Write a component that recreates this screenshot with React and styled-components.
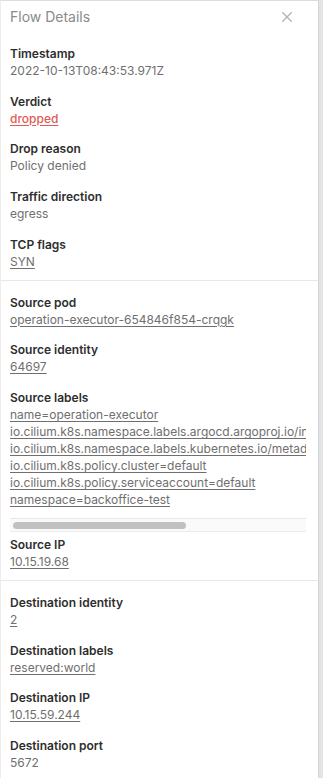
import styled, { createGlobalStyle } from "styled-components"

const Global = createGlobalStyle`
    * { box-sizing: border-box; }
    html, body { margin: 0; padding: 0; }
    body {
        background: #e3e4e8;
        font-family: Inter, "Noto Sans", "Liberation Sans", sans-serif;
        -webkit-font-smoothing: antialiased;
    }
`

const Panel = styled.aside`
    width: 319px;
    min-height: 100vh;
    background: #fff;
    border-top: 1px solid #dedede;
    border-left: 1px solid #ececec;
    border-right: 1px solid #d3d4d9;
`

const Header = styled.header`
    height: 31px;
    padding: 1px 25px 0 9px;
    display: flex;
    align-items: center;
    justify-content: space-between;
`

const Title = styled.h2`
    margin: 0;
    font-size: 14px;
    font-weight: 400;
    color: #8a8a8a;
    line-height: 20px;
`

const Close = styled.button`
    border: 0;
    background: none;
    padding: 0;
    width: 12px;
    height: 12px;
    display: flex;
    cursor: pointer;
    svg { display: block; }
`

const Group = styled.section`
    padding: 13px 12px 10px 9px;
    display: flex;
    flex-direction: column;
    gap: 13.7px;
    & + & { border-top: 1px solid #e8e8e8; }
`

const Item = styled.div`
    display: flex;
    flex-direction: column;
    margin-bottom: ${p => p.$tight ? "-10px" : "0"};
`

const Label = styled.div`
    font-size: 12px;
    line-height: 17px;
    font-weight: 600;
    color: #2e2e2e;
`

const Value = styled.div`
    font-size: 12px;
    line-height: 17px;
    font-weight: ${p => p.$danger ? 500 : 400};
    color: ${p => p.$danger ? "#e25a52" : "#6f6f6f"};
    text-decoration: ${p => p.$link ? "underline" : "none"};
    text-underline-offset: 2px;
    white-space: nowrap;
`

const Scroller = styled.div`
    overflow-x: auto;
    overflow-y: hidden;
    padding-bottom: 10px;
    scrollbar-width: none;
    &::-webkit-scrollbar { display: none; }
`

const LabelList = styled.div`
    display: flex;
    flex-direction: column;
    width: max-content;
`

const Track = styled.div`
    height: 14px;
    padding: 3px 3px 3px 3px;
    background: #fafafa;
    border-top: 1px solid #e8e8e8;
    border-bottom: 1px solid #ececec;
`

const Thumb = styled.div`
    height: 7px;
    width: ${p => p.$size};
    border-radius: 4px;
    background: #c1c1c1;
`

const CloseIcon = () => (
    <svg width="12" height="12" viewBox="0 0 12 12">
        <path d="M1.3 1.3 L10.7 10.7 M10.7 1.3 L1.3 10.7" stroke="#b3b3b3" strokeWidth="1.3" fill="none" />
    </svg>
)

const sourceLabels = [
    "name=operation-executor",
    "io.cilium.k8s.namespace.labels.argocd.argoproj.io/instance=backoffice-test",
    "io.cilium.k8s.namespace.labels.kubernetes.io/metadata.name=backoffice-test",
    "io.cilium.k8s.policy.cluster=default",
    "io.cilium.k8s.policy.serviceaccount=default",
    "namespace=backoffice-test",
]

function Field({ label, value, link, danger }) {
    return (
        <Item>
            <Label>{label}</Label>
            <Value $link={link} $danger={danger}>{value}</Value>
        </Item>
    )
}

export default function App() {
    return (
        <>
            <Global />
            <Panel>
                <Header>
                    <Title>Flow Details</Title>
                    <Close aria-label="Close"><CloseIcon /></Close>
                </Header>

                <Group>
                    <Field label="Timestamp" value="2022-10-13T08:43:53.971Z" />
                    <Field label="Verdict" value="dropped" link danger />
                    <Field label="Drop reason" value="Policy denied" />
                    <Field label="Traffic direction" value="egress" />
                    <Field label="TCP flags" value="SYN" link />
                </Group>

                <Group>
                    <Field label="Source pod" value="operation-executor-654846f854-crqgk" link />
                    <Field label="Source identity" value="64697" link />
                    <Item $tight>
                        <Label>Source labels</Label>
                        <Scroller>
                            <LabelList>
                                {sourceLabels.map(l => <Value key={l} $link>{l}</Value>)}
                            </LabelList>
                        </Scroller>
                        <Track><Thumb $size="173px" /></Track>
                    </Item>
                    <Field label="Source IP" value="10.15.19.68" link />
                </Group>

                <Group>
                    <Field label="Destination identity" value="2" link />
                    <Field label="Destination labels" value="reserved:world" link />
                    <Field label="Destination IP" value="10.15.59.244" link />
                    <Field label="Destination port" value="5672" />
                </Group>
            </Panel>
        </>
    )
}
